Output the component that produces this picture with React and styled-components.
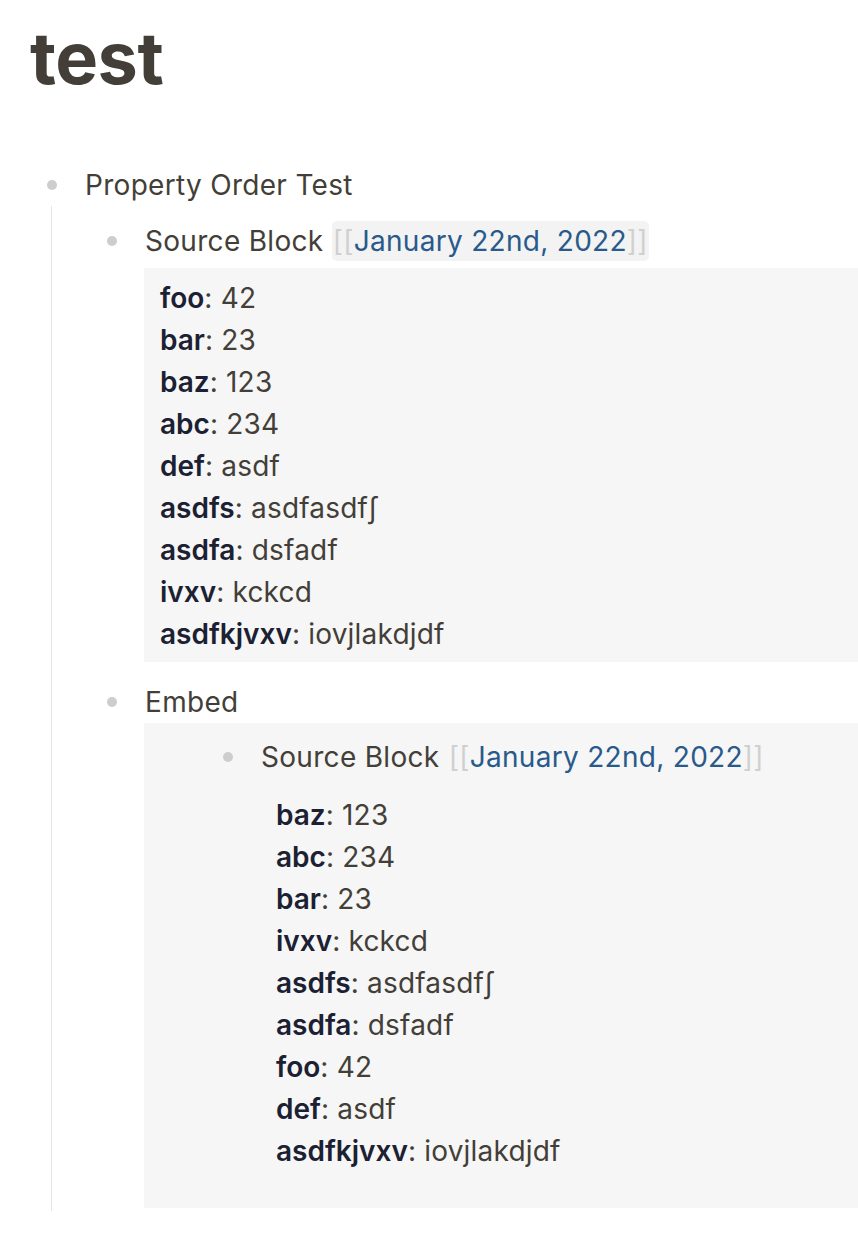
import React from 'react';
import styled, { createGlobalStyle } from 'styled-components';

const Global = createGlobalStyle`
  body {
    margin: 0;
    background: #ffffff;
    font-family: Inter, "Noto Sans", sans-serif;
    color: #433f38;
  }
`;

const Page = styled.div`
  padding: 0 0 0 30px;
  overflow: hidden;
`;

const Title = styled.h1`
  margin: 0;
  padding-top: 14px;
  font-size: 72px;
  line-height: 88px;
  font-weight: 700;
  color: #433f38;
  letter-spacing: -0.5px;
`;

const Tree = styled.div`
  margin-top: 62px;
`;

const Block = styled.div`
  margin-top: ${(p) => p.$gap || 0}px;
`;

const Row = styled.div`
  display: flex;
  align-items: flex-start;
`;

const BulletCol = styled.div`
  width: 55px;
  flex: none;
  height: 42px;
  display: flex;
  align-items: center;
`;

const Dot = styled.span`
  width: 10px;
  height: 10px;
  border-radius: 50%;
  background: #cdcdcd;
  margin-left: 17px;
`;

const Content = styled.div`
  flex: 1;
  min-width: 0;
  font-size: 28px;
  line-height: 42px;
  letter-spacing: 0.3px;
  white-space: nowrap;
`;

const Children = styled.div`
  margin-left: 21px;
  border-left: 1px solid #e6e6e6;
  padding-left: 38px;
  padding-top: ${(p) => p.$top || 0}px;
  padding-bottom: ${(p) => p.$bottom || 0}px;
`;

const PageRef = styled.span`
  display: inline-block;
  background: ${(p) => (p.$plain ? 'transparent' : '#f3f3f3')};
  border-radius: 5px;
  padding: 0 1px;
  line-height: 40px;
`;

const Bracket = styled.span`
  color: #d0d0d0;
`;

const Link = styled.span`
  color: #285a8b;
`;

const Props = styled.div`
  background: ${(p) => (p.$bare ? 'transparent' : '#f6f6f6')};
  margin-top: ${(p) => p.$top}px;
  margin-left: -1px;
  padding: ${(p) => p.$pad};
  margin-right: -40px;
`;

const Prop = styled.div`
  font-size: 28px;
  line-height: 42px;
  letter-spacing: 0.2px;
  white-space: nowrap;
`;

const Key = styled.span`
  font-weight: 600;
  color: #1b2133;
  letter-spacing: 0;
`;

const Embed = styled.div`
  background: #f6f6f6;
  margin: 0 -40px 0 -1px;
  padding: 13px 0 36px 62px;
`;

const Ref = ({ plain }) => (
  <PageRef $plain={plain}>
    <Bracket>[[</Bracket>
    <Link>January 22nd, 2022</Link>
    <Bracket>]]</Bracket>
  </PageRef>
);

const PropList = ({ items, bare }) => (
  <Props $bare={bare} $top={bare ? 16 : 6} $pad={bare ? '0 0 0 16px' : '9px 0 7px 16px'}>
    {items.map(([k, v]) => (
      <Prop key={k}>
        <Key>{k}</Key>: {v}
      </Prop>
    ))}
  </Props>
);

const first = [
  ['foo', '42'],
  ['bar', '23'],
  ['baz', '123'],
  ['abc', '234'],
  ['def', 'asdf'],
  ['asdfs', 'asdfasdfʃ'],
  ['asdfa', 'dsfadf'],
  ['ivxv', 'kckcd'],
  ['asdfkjvxv', 'iovjlakdjdf'],
];

const second = [
  ['baz', '123'],
  ['abc', '234'],
  ['bar', '23'],
  ['ivxv', 'kckcd'],
  ['asdfs', 'asdfasdfʃ'],
  ['asdfa', 'dsfadf'],
  ['foo', '42'],
  ['def', 'asdf'],
  ['asdfkjvxv', 'iovjlakdjdf'],
];

export default function App() {
  return (
    <Page>
      <Global />
      <Title>test</Title>
      <Tree>
        <Block>
          <Row>
            <BulletCol><Dot /></BulletCol>
            <Content>Property Order Test</Content>
          </Row>
          <Children $top={14} $bottom={3}>
            <Block>
              <Row>
                <BulletCol><Dot /></BulletCol>
                <Content>
                  Source Block <Ref />
                  <PropList items={first} />
                </Content>
              </Row>
            </Block>
            <Block $gap={19}>
              <Row>
                <BulletCol><Dot /></BulletCol>
                <Content>
                  Embed
                  <Embed>
                    <Row>
                      <BulletCol><Dot /></BulletCol>
                      <Content>
                        Source Block <Ref plain />
                        <PropList items={second} bare />
                      </Content>
                    </Row>
                  </Embed>
                </Content>
              </Row>
            </Block>
          </Children>
        </Block>
      </Tree>
    </Page>
  );
}
